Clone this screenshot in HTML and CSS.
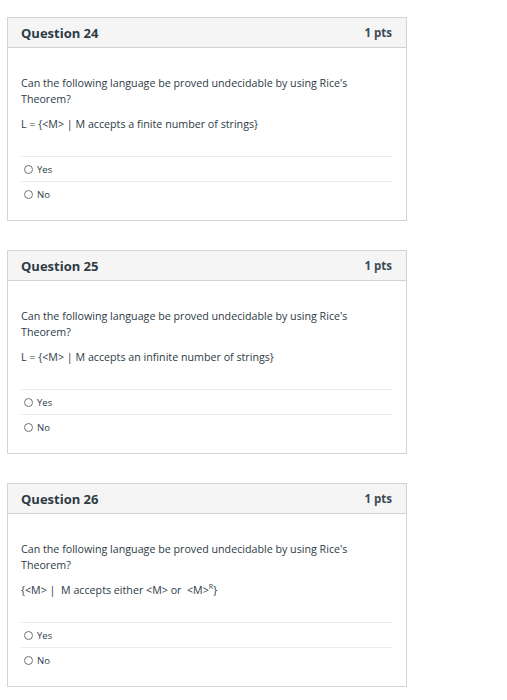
FILE: index.html
```html
<!DOCTYPE html>
<html>
<head>
<meta charset="utf-8">
<link rel="stylesheet" href="styles.css">
</head>
<body>
<div class="page">
  <section class="card">
    <header class="card-head"><h2>Question 24</h2><span class="pts">1 pts</span></header>
    <div class="card-body">
      <p class="q">Can the following language be proved undecidable by using Rice's Theorem?</p>
      <p class="q">L = {&lt;M&gt; | M accepts a finite number of strings}</p>
      <ul class="answers">
        <li><span class="radio"></span>Yes</li>
        <li><span class="radio"></span>No</li>
      </ul>
    </div>
  </section>
  <section class="card">
    <header class="card-head"><h2>Question 25</h2><span class="pts">1 pts</span></header>
    <div class="card-body">
      <p class="q">Can the following language be proved undecidable by using Rice's Theorem?</p>
      <p class="q">L = {&lt;M&gt; | M accepts an infinite number of strings}</p>
      <ul class="answers">
        <li><span class="radio"></span>Yes</li>
        <li><span class="radio"></span>No</li>
      </ul>
    </div>
  </section>
  <section class="card">
    <header class="card-head"><h2>Question 26</h2><span class="pts">1 pts</span></header>
    <div class="card-body">
      <p class="q">Can the following language be proved undecidable by using Rice's Theorem?</p>
      <p class="q">{&lt;M&gt; |&nbsp; M accepts either &lt;M&gt; or &nbsp;&lt;M&gt;<sup>R</sup>}</p>
      <ul class="answers">
        <li><span class="radio"></span>Yes</li>
        <li><span class="radio"></span>No</li>
      </ul>
    </div>
  </section>
</div>
</body>
</html>
```

FILE: styles.css
```css
html, body {
  margin: 0;
  padding: 0;
  background: #ffffff;
}
body {
  font-family: "Open Sans", "Liberation Sans", sans-serif;
  color: #2d3b45;
}
.page {
  padding: 17px 0 0 7px;
  display: flex;
  flex-direction: column;
  gap: 29px;
}
.card {
  width: 398px;
  border: 1px solid #d0d4d7;
  background: #fff;
}
.card-head {
  height: 29px;
  background: #f5f5f5;
  border-bottom: 1px solid #d0d4d7;
  display: flex;
  align-items: center;
  justify-content: space-between;
  padding: 0 14px 0 13px;
}
.card-head h2 {
  margin: 0;
  font-size: 13px;
  font-weight: 700;
  color: #2d3b45;
}
.pts {
  font-size: 11.5px;
  font-weight: 700;
  color: #3d4a54;
}
.card-body {
  padding: 27px 14px 14px 13px;
}
.q {
  margin: 0 0 9px 0;
  font-size: 10.7px;
  line-height: 16px;
  max-width: 360px;
}
.q sup {
  font-size: 7px;
  line-height: 0;
}
.answers {
  list-style: none;
  margin: 24px 0 0 0;
  padding: 0;
}
.answers li {
  border-top: 1px solid #e8eaec;
  height: 24px;
  display: flex;
  align-items: center;
  padding-left: 3px;
  font-size: 9.5px;
  color: #2d3b45;
}
.radio {
  width: 7px;
  height: 7px;
  border: 1px solid #6b757c;
  border-radius: 50%;
  margin-right: 4px;
  background: #fff;
}
```
